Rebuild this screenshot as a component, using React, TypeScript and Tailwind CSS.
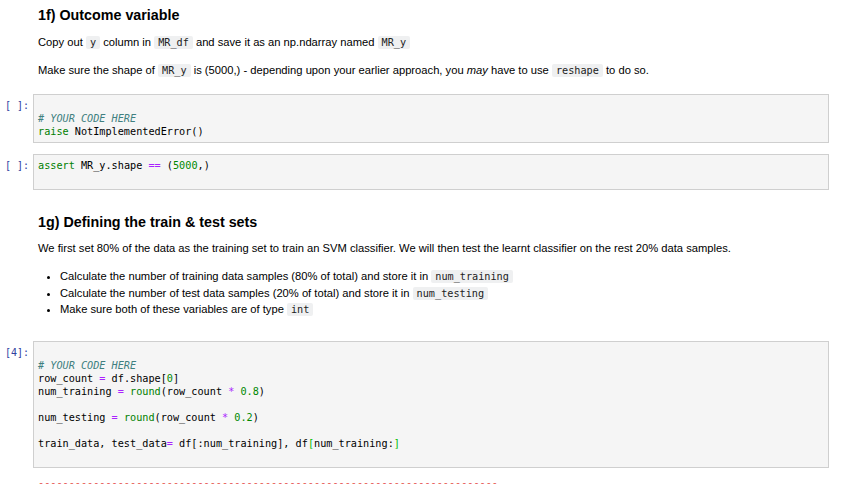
import React from 'react';

const mono = "font-['DejaVu_Sans_Mono',monospace]";

const Code: React.FC<{ children: React.ReactNode }> = ({ children }) => (
  <code className={`${mono} text-[10.2px] leading-none bg-[#eff0f1] px-[4px] py-[1px] rounded-[2px] text-[#222]`}>{children}</code>
);

const Kw: React.FC<{ children: React.ReactNode }> = ({ children }) => (
  <span className="text-[#008000]">{children}</span>
);
const Op: React.FC<{ children: React.ReactNode }> = ({ children }) => (
  <span className="text-[#aa22ff]">{children}</span>
);
const Num: React.FC<{ children: React.ReactNode }> = ({ children }) => (
  <span className="text-[#008800]">{children}</span>
);
const Bi: React.FC<{ children: React.ReactNode }> = ({ children }) => (
  <span className="text-[#008000]">{children}</span>
);
const Cm: React.FC<{ children: React.ReactNode }> = ({ children }) => (
  <span className="text-[#408080] italic">{children}</span>
);
const Br: React.FC<{ children: React.ReactNode }> = ({ children }) => (
  <span className="text-[#00bb00]">{children}</span>
);

const CodeCell: React.FC<{ prompt: string; lines: React.ReactNode[]; className?: string }> = ({ prompt, lines, className }) => (
  <div className={`flex ${className ?? ''}`}>
    <div className={`w-[33px] shrink-0 pl-[5px] pt-[5px] ${mono} text-[10px] leading-[13px] text-[#303f9f]`}>
      {prompt}
    </div>
    <div className="w-[796px] border border-[#cfcfcf] bg-[#f5f5f5] px-[4px] py-[4px]">
      <pre className={`${mono} text-[10.2px] leading-[13px] text-black whitespace-pre`}>
        {lines.map((l, i) => (
          <div key={i} className="h-[13px]">{l}</div>
        ))}
      </pre>
    </div>
  </div>
);

export default function App() {
  return (
    <div className="w-[842px] h-[486px] overflow-hidden bg-white font-['Liberation_Sans',Arial,sans-serif] text-black">
      <div className="pl-[38px]">
        <h2 className="mt-[5px] text-[14.3px] leading-[20px] font-bold">1f) Outcome variable</h2>
        <p className="mt-[9px] text-[11.2px] leading-[17px]">
          Copy out <Code>y</Code> column in <Code>MR_df</Code> and save it as an np.ndarray named <Code>MR_y</Code>
        </p>
        <p className="mt-[11px] text-[11.2px] leading-[17px]">
          Make sure the shape of <Code>MR_y</Code> is (5000,) - depending upon your earlier approach, you <em>may</em> have to use <Code>reshape</Code> to do so.
        </p>
      </div>

      <CodeCell
        className="mt-[15px]"
        prompt="[ ]:"
        lines={[
          '',
          <Cm># YOUR CODE HERE</Cm>,
          <><Kw>raise</Kw> NotImplementedError()</>,
        ]}
      />

      <CodeCell
        className="mt-[11px]"
        prompt="[ ]:"
        lines={[
          <><Kw>assert</Kw> MR_y.shape <Op>==</Op> (<Num>5000</Num>,)</>,
          '',
        ]}
      />

      <div className="pl-[38px]">
        <h2 className="mt-[22px] text-[14.3px] leading-[20px] font-bold">1g) Defining the train &amp; test sets</h2>
        <p className="mt-[8px] text-[11.2px] leading-[17px]">
          We first set 80% of the data as the training set to train an SVM classifier. We will then test the learnt classifier on the rest 20% data samples.
        </p>
        <ul className="mt-[11px] list-disc pl-[22px] text-[11.2px] leading-[16.7px]">
          <li>Calculate the number of training data samples (80% of total) and store it in <Code>num_training</Code></li>
          <li>Calculate the number of test data samples (20% of total) and store it in <Code>num_testing</Code></li>
          <li>Make sure both of these variables are of type <Code>int</Code></li>
        </ul>
      </div>

      <CodeCell
        className="mt-[23px]"
        prompt="[4]:"
        lines={[
          '',
          <Cm># YOUR CODE HERE</Cm>,
          <>row_count <Op>=</Op> df.shape[<Num>0</Num>]</>,
          <>num_training <Op>=</Op> <Bi>round</Bi>(row_count <Op>*</Op> <Num>0.8</Num>)</>,
          '',
          <>num_testing <Op>=</Op> <Bi>round</Bi>(row_count <Op>*</Op> <Num>0.2</Num>)</>,
          '',
          <>train_data, test_data<Op>=</Op> df[:num_training], df<Br>[</Br>num_training:<Br>]</Br></>,
          '',
        ]}
      />

      <div className={`pl-[38px] mt-[11px] ${mono} text-[10.2px] leading-[8px] text-[#e75c58] whitespace-pre`}>
        {'-'.repeat(75)}
      </div>
    </div>
  );
}
